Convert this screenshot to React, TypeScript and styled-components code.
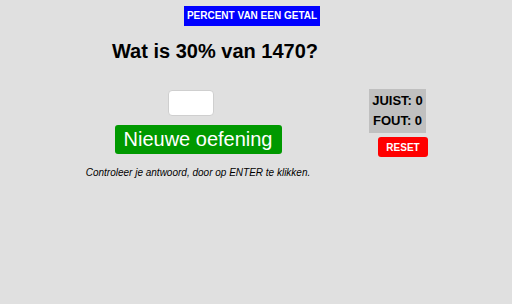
import React from 'react'
import styled, { createGlobalStyle } from 'styled-components'

const GlobalStyle = createGlobalStyle`
  html, body {
    margin: 0;
    padding: 0;
    background: #e0e0e0;
    font-family: "Liberation Sans", Arial, sans-serif;
  }
`

const Page = styled.div`
  width: 512px;
  height: 304px;
  padding-top: 6px;
  box-sizing: border-box;
  background: #e0e0e0;
`

const TitleRow = styled.div`
  display: flex;
  justify-content: center;
  padding-right: 8px;
`

const TitleBadge = styled.div`
  box-sizing: border-box;
  width: 136px;
  height: 20px;
  line-height: 20px;
  background: #0000ff;
  color: #fff;
  font-size: 10px;
  font-weight: bold;
  text-align: center;
  white-space: nowrap;
`

const Main = styled.div`
  display: grid;
  grid-template-columns: 369px auto;
  margin-top: 14px;
`

const LeftColumn = styled.div`
  display: flex;
  flex-direction: column;
  align-items: center;
  padding-left: 27px;
`

const Question = styled.h1`
  margin: 0;
  padding-left: 34px;
  font-size: 20px;
  line-height: 23px;
  font-weight: bold;
  color: #000;
  white-space: nowrap;
`

const AnswerInput = styled.input`
  box-sizing: border-box;
  width: 46px;
  height: 26px;
  margin-top: 27px;
  margin-right: 14px;
  border: 1px solid #cfcfcf;
  border-radius: 4px;
  background: #fff;
  outline: none;
`

const NewButton = styled.button`
  box-sizing: border-box;
  width: 167px;
  height: 29px;
  margin-top: 9px;
  padding: 0;
  border: none;
  border-radius: 3px;
  background: #009900;
  color: #fff;
  font-family: "Liberation Sans", Arial, sans-serif;
  font-size: 20px;
  line-height: 29px;
  cursor: pointer;
`

const Hint = styled.p`
  margin: 13px 0 0;
  font-size: 10px;
  line-height: 12px;
  font-style: italic;
  color: #000;
  white-space: nowrap;
`

const RightColumn = styled.div`
  display: flex;
  flex-direction: column;
  align-items: flex-start;
  margin-top: 49px;
`

const ScoreBox = styled.div`
  box-sizing: border-box;
  width: 57px;
  padding: 2px 0;
  background: #c0c0c0;
  text-align: center;
`

const ScoreLine = styled.div`
  font-size: 13px;
  line-height: 20px;
  font-weight: bold;
  color: #000;
  white-space: nowrap;
`

const ResetButton = styled.button`
  box-sizing: border-box;
  width: 50px;
  height: 20px;
  margin: 4px 0 0 9px;
  padding: 0;
  border: none;
  border-radius: 3px;
  background: #ff0000;
  color: #fff;
  font-family: "Liberation Sans", Arial, sans-serif;
  font-size: 10px;
  font-weight: bold;
  cursor: pointer;
`

export default function App() {
  return (
    <>
      <GlobalStyle />
      <Page>
        <TitleRow>
          <TitleBadge>PERCENT VAN EEN GETAL</TitleBadge>
        </TitleRow>
        <Main>
          <LeftColumn>
            <Question>Wat is 30% van 1470?</Question>
            <AnswerInput type="text" />
            <NewButton>Nieuwe oefening</NewButton>
            <Hint>Controleer je antwoord, door op ENTER te klikken.</Hint>
          </LeftColumn>
          <RightColumn>
            <ScoreBox>
              <ScoreLine>JUIST: 0</ScoreLine>
              <ScoreLine>FOUT: 0</ScoreLine>
            </ScoreBox>
            <ResetButton>RESET</ResetButton>
          </RightColumn>
        </Main>
      </Page>
    </>
  )
}
